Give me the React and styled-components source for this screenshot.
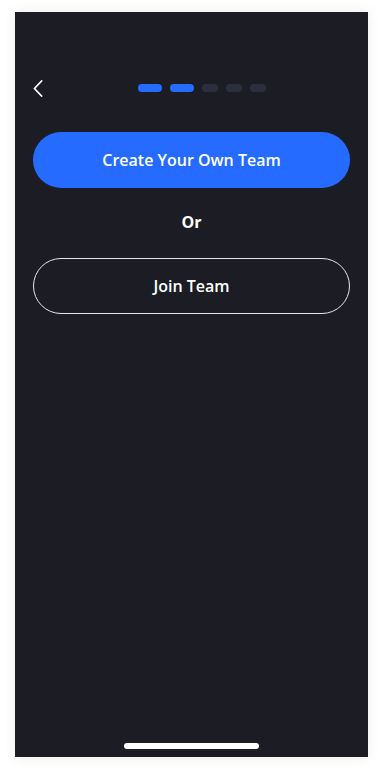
import React from "react";
import styled, { createGlobalStyle } from "styled-components";

const Global = createGlobalStyle`
  html, body { margin: 0; padding: 0; background: #ffffff; }
  body { font-family: "Open Sans", Lato, "Noto Sans", sans-serif; }
`;

const Page = styled.div`
  width: 380px;
  height: 768px;
  box-sizing: border-box;
  padding: 12px 12px 11px 15px;
  background: #ffffff;
`;

const Phone = styled.div`
  width: 353px;
  height: 745px;
  background: #1c1d24;
  box-shadow: 0 0 12px rgba(0, 0, 0, 0.08);
  display: flex;
  flex-direction: column;
  box-sizing: border-box;
  padding: 64px 18px 8px;
`;

const Header = styled.div`
  height: 24px;
  display: flex;
  align-items: center;
`;

const BackButton = styled.button`
  width: 10px;
  height: 17px;
  padding: 0;
  border: none;
  background: none;
  display: flex;
  color: #ffffff;
`;

const Dots = styled.div`
  display: flex;
  gap: 8px;
  margin-left: 95px;
`;

const Dot = styled.span`
  width: ${(p) => (p.$active ? 24 : 16)}px;
  height: 8px;
  border-radius: 4px;
  background: ${(p) => (p.$active ? "#256bff" : "#2b2e3c")};
`;

const Actions = styled.div`
  margin-top: 32px;
  display: flex;
  flex-direction: column;
  align-items: stretch;
`;

const PillButton = styled.button`
  height: 56px;
  border-radius: 28px;
  box-sizing: border-box;
  border: ${(p) => (p.$outline ? "1px solid #e6e6ea" : "none")};
  background: ${(p) => (p.$outline ? "transparent" : "#256bff")};
  color: #ffffff;
  font-family: "Open Sans", Lato, sans-serif;
  font-weight: 600;
  font-size: 16px;
  padding: 0;
`;

const OrText = styled.div`
  height: 70px;
  display: flex;
  align-items: center;
  justify-content: center;
  color: #ffffff;
  font-family: "Open Sans", Lato, sans-serif;
  font-weight: 700;
  font-size: 16px;
  padding-bottom: 2px;
  box-sizing: border-box;
`;

const Spacer = styled.div`
  flex: 1;
`;

const HomeIndicator = styled.div`
  width: 135px;
  height: 6px;
  border-radius: 3px;
  background: #ffffff;
  align-self: center;
`;

export default function App() {
  const steps = [true, true, false, false, false];
  return (
    <>
      <Global />
      <Page>
        <Phone>
          <Header>
            <BackButton aria-label="Back">
              <svg width="10" height="17" viewBox="0 0 10 17" fill="none">
                <polyline
                  points="8.6,1 1.4,8.5 8.6,16"
                  stroke="#ffffff"
                  strokeWidth="1.8"
                  strokeLinecap="round"
                  strokeLinejoin="round"
                />
              </svg>
            </BackButton>
            <Dots>
              {steps.map((a, i) => (
                <Dot key={i} $active={a} />
              ))}
            </Dots>
          </Header>
          <Actions>
            <PillButton>Create Your Own Team</PillButton>
            <OrText>Or</OrText>
            <PillButton $outline>Join Team</PillButton>
          </Actions>
          <Spacer />
          <HomeIndicator />
        </Phone>
      </Page>
    </>
  );
}
